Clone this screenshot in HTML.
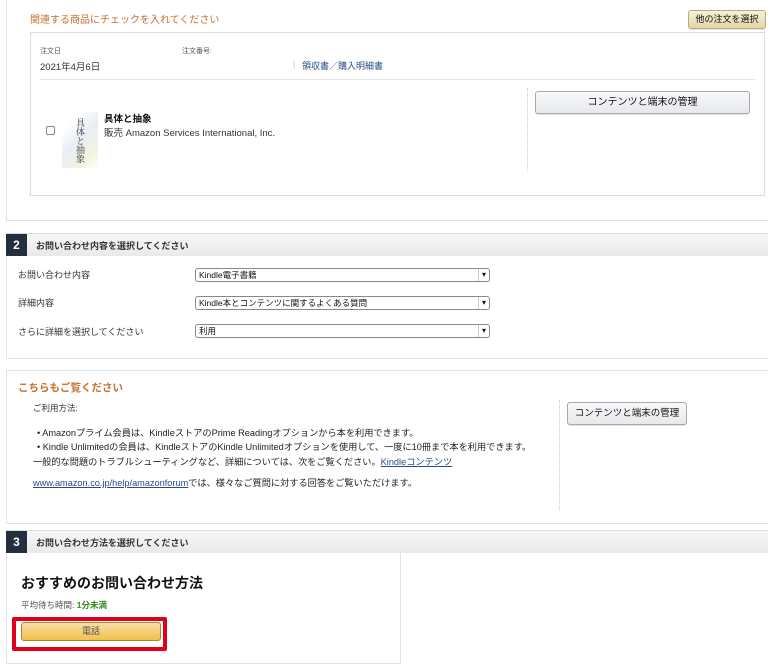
<!DOCTYPE html>
<html><head><meta charset="utf-8"><style>
body{margin:0;width:768px;height:653px;background:#fff;position:relative;overflow:hidden;font-family:"Liberation Sans","Noto Sans CJK JP",sans-serif;color:#111;}
.a{position:absolute;white-space:nowrap;}
.panel{position:absolute;border:1px solid #e3e3e3;background:#fff;}
.btn{position:absolute;border:1px solid #a9a9a9;border-radius:3px;background:linear-gradient(#f7f8fa,#e7e9ec);font-size:10px;text-align:center;box-shadow:0 1px 0 rgba(0,0,0,.1);}
.hdr{position:absolute;left:6px;right:0;height:22px;background:linear-gradient(#f7f7f7,#e9e9e9);border-top:1px solid #ddd;}
.num{position:absolute;left:0;top:0;width:21px;height:22px;background:#232f3e;color:#fff;font-weight:bold;font-size:12px;text-align:center;line-height:22px;}
.sel{position:absolute;left:195px;width:290px;height:12px;border:1px solid #888;border-radius:3px;font-size:8.5px;line-height:12px;padding-left:3px;box-sizing:content-box;background:#fff;}
.sel:after{content:"▾";position:absolute;right:0;top:0;width:10px;height:12px;border-left:1px solid #ccc;font-size:8px;text-align:center;}
.lbl{font-size:9px;color:#333;}
</style></head><body>
<div class="panel" style="left:6px;top:-2px;width:770px;height:222px;border-top:none"></div>
<div class="a" style="left:30px;top:11px;font-size:10px;color:#c7702e">関連する商品にチェックを入れてください</div>
<div class="btn" style="left:688px;top:10px;width:76px;height:17px;line-height:17px;font-size:9px;background:linear-gradient(#f6f0d8,#e2d6a6);border-color:#b8ab7c">他の注文を選択</div>
<div class="panel" style="left:30px;top:32px;width:733px;height:162px;border-color:#ddd"></div>
<div class="a" style="left:40px;top:46px;font-size:7px;color:#555">注文日</div>
<div class="a" style="left:182px;top:46px;font-size:7px;color:#555">注文番号:</div>
<div class="a" style="left:40px;top:59px;font-size:9.5px;color:#333">2021年4月6日</div>
<div class="a" style="left:293px;top:59px;font-size:9px;color:#ccc">|</div>
<div class="a" style="left:302px;top:59px;font-size:9px;color:#2a4b8d">領収書／購入明細書</div>
<div class="a" style="left:40px;top:79px;width:715px;height:1px;background:#e4e4e4"></div>
<div class="a" style="left:527px;top:88px;height:82px;border-left:1px dotted #ccc"></div>
<div class="btn" style="left:535px;top:91px;width:213px;height:21px;line-height:21px">コンテンツと端末の管理</div>
<div class="a" style="left:46px;top:126px;width:7px;height:7px;border:1px solid #888;border-radius:2px"></div>
<div class="a" style="left:62px;top:112px;width:36px;height:56px;background:linear-gradient(135deg,#fff 20%,#e8eef5 50%,#f3f3e0 80%,#fff);font-size:9px;font-family:'Noto Serif CJK SC',serif;color:#333;writing-mode:vertical-rl;text-align:center;line-height:36px">具体と抽象</div>
<div class="a" style="left:104px;top:111px;font-size:9.5px;font-weight:bold">具体と抽象</div>
<div class="a" style="left:104px;top:125px;font-size:9.5px;color:#333">販売 Amazon Services International, Inc.</div>

<div class="panel" style="left:6px;top:233px;width:770px;height:124px"></div>
<div class="hdr" style="top:233px"><div class="num">2</div><div class="a" style="left:30px;top:5px;font-size:9px;font-weight:bold;color:#333">お問い合わせ内容を選択してください</div></div>
<div class="a lbl" style="left:18px;top:268px">お問い合わせ内容</div>
<div class="sel" style="top:268px">Kindle電子書籍</div>
<div class="a lbl" style="left:18px;top:296px">詳細内容</div>
<div class="sel" style="top:296px">Kindle本とコンテンツに関するよくある質問</div>
<div class="a lbl" style="left:18px;top:325px">さらに詳細を選択してください</div>
<div class="sel" style="top:324px">利用</div>

<div class="panel" style="left:6px;top:370px;width:770px;height:152px"></div>
<div class="a" style="left:18px;top:380px;font-size:10.5px;font-weight:bold;color:#c7702e">こちらもご覧ください</div>
<div class="a" style="left:33px;top:402px;font-size:8.5px;color:#333">ご利用方法:</div>
<div class="a" style="left:37px;top:425px;font-size:9.2px;color:#222">• Amazonプライム会員は、KindleストアのPrime Readingオプションから本を利用できます。</div>
<div class="a" style="left:37px;top:439px;font-size:9.2px;color:#222">• Kindle Unlimitedの会員は、KindleストアのKindle Unlimitedオプションを使用して、一度に10冊まで本を利用できます。</div>
<div class="a" style="left:33px;top:454px;font-size:9.2px;color:#222">一般的な問題のトラブルシューティングなど、詳細については、次をご覧ください。<span style="color:#2a4b8d;text-decoration:underline">Kindleコンテンツ</span></div>
<div class="a" style="left:33px;top:475px;font-size:9.2px;color:#222"><span style="color:#2a4b8d;text-decoration:underline">www.amazon.co.jp/help/amazonforum</span>では、様々なご質問に対する回答をご覧いただけます。</div>
<div class="a" style="left:559px;top:400px;height:110px;border-left:1px dotted #ccc"></div>
<div class="btn" style="left:567px;top:402px;width:118px;height:21px;line-height:21px;font-size:9.5px">コンテンツと端末の管理</div>

<div class="hdr" style="top:530px"><div class="num">3</div><div class="a" style="left:30px;top:5px;font-size:9px;font-weight:bold;color:#333">お問い合わせ方法を選択してください</div></div>
<div class="panel" style="left:6px;top:553px;width:393px;height:110px;border-top:none"></div>
<div class="a" style="left:21px;top:573px;font-size:14px;font-weight:bold;color:#111">おすすめのお問い合わせ方法</div>
<div class="a" style="left:21px;top:599px;font-size:8.5px;color:#555">平均待ち時間: <b style="color:#2e8b1e">1分未満</b></div>
<div class="a" style="left:12px;top:617px;width:147px;height:26px;border:4px solid #e0001b;border-radius:2px"></div>
<div class="a" style="left:21px;top:622px;width:138px;height:17px;border:1px solid #a88734;border-radius:3px;background:linear-gradient(#f7dfa5,#f0c14b);font-size:9px;line-height:17px;text-align:center;color:#555">電話</div>
</body></html>
